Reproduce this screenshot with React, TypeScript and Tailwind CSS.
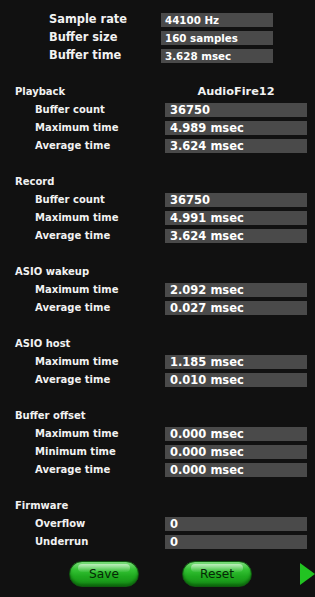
const FONT = { fontFamily: '"DejaVu Sans", Verdana, sans-serif' };

interface Section {
  title: string;
  extra?: string;
  rows: [string, string][];
}

const TOP_ROWS: [string, string][] = [
  ["Sample rate", "44100 Hz"],
  ["Buffer size", "160 samples"],
  ["Buffer time", "3.628 msec"],
];

const SECTIONS: Section[] = [
  {
    title: "Playback",
    extra: "AudioFire12",
    rows: [
      ["Buffer count", "36750"],
      ["Maximum time", "4.989 msec"],
      ["Average time", "3.624 msec"],
    ],
  },
  {
    title: "Record",
    rows: [
      ["Buffer count", "36750"],
      ["Maximum time", "4.991 msec"],
      ["Average time", "3.624 msec"],
    ],
  },
  {
    title: "ASIO wakeup",
    rows: [
      ["Maximum time", "2.092 msec"],
      ["Average time", "0.027 msec"],
    ],
  },
  {
    title: "ASIO host",
    rows: [
      ["Maximum time", "1.185 msec"],
      ["Average time", "0.010 msec"],
    ],
  },
  {
    title: "Buffer offset",
    rows: [
      ["Maximum time", "0.000 msec"],
      ["Minimum time", "0.000 msec"],
      ["Average time", "0.000 msec"],
    ],
  },
  {
    title: "Firmware",
    rows: [
      ["Overflow", "0"],
      ["Underrun", "0"],
    ],
  },
];

function GreenButton({ label }: { label: string }) {
  return (
    <button
      className="relative w-[70px] h-[26px] rounded-full border border-[#0e5a0e] bg-[linear-gradient(180deg,#7fe07f_0%,#36c436_30%,#1faa1f_60%,#168c16_100%)] shadow-[inset_0_-2px_3px_rgba(0,60,0,0.5)] text-[12.2px] font-normal text-[#062806] leading-none flex items-center justify-center"
      style={FONT}
    >
      <span className="absolute left-[8px] right-[8px] top-[2px] h-[8px] rounded-full bg-[linear-gradient(180deg,rgba(255,255,255,0.55),rgba(255,255,255,0.05))]" />
      <span className="relative">{label}</span>
    </button>
  );
}

export default function App() {
  return (
    <div className="w-[315px] h-[597px] bg-[#111111] overflow-hidden pt-[11px] text-[#f2f2f2] font-bold" style={FONT}>
      {TOP_ROWS.map(([label, value]) => (
        <div key={label} className="h-[18px] flex items-center">
          <div className="w-[161px] pl-[49px] text-[11.4px] leading-none">{label}</div>
          <div className="w-[112px] h-[14px] bg-[#4a4a4a] pl-[4px] text-[10.3px] leading-[14px] text-white">{value}</div>
        </div>
      ))}
      <div className="h-[18px]" />

      {SECTIONS.map((section) => (
        <div key={section.title}>
          <div className="h-[18px] flex items-center">
            <div className="w-[165px] pl-[15px] text-[10px] leading-none">{section.title}</div>
            {section.extra && (
              <div className="w-[142px] text-center text-[11.3px] leading-none">{section.extra}</div>
            )}
          </div>
          {section.rows.map(([label, value]) => (
            <div key={label} className="h-[18px] flex items-center">
              <div className="w-[165px] pl-[35px] text-[10px] leading-none">{label}</div>
              <div className="w-[142px] h-[14px] bg-[#4a4a4a] pl-[5px] text-[11.5px] leading-[14px] text-white">{value}</div>
            </div>
          ))}
          {section.title !== "Firmware" && <div className="h-[18px]" />}
        </div>
      ))}

      <div className="mt-[10px] h-[26px] flex items-center">
        <div className="ml-[69px]">
          <GreenButton label="Save" />
        </div>
        <div className="ml-[43px]">
          <GreenButton label="Reset" />
        </div>
        <svg className="ml-[48px]" width="15" height="22" viewBox="0 0 15 22">
          <polygon points="0,0 15,11 0,22" fill="#22c322" />
        </svg>
      </div>
    </div>
  );
}
